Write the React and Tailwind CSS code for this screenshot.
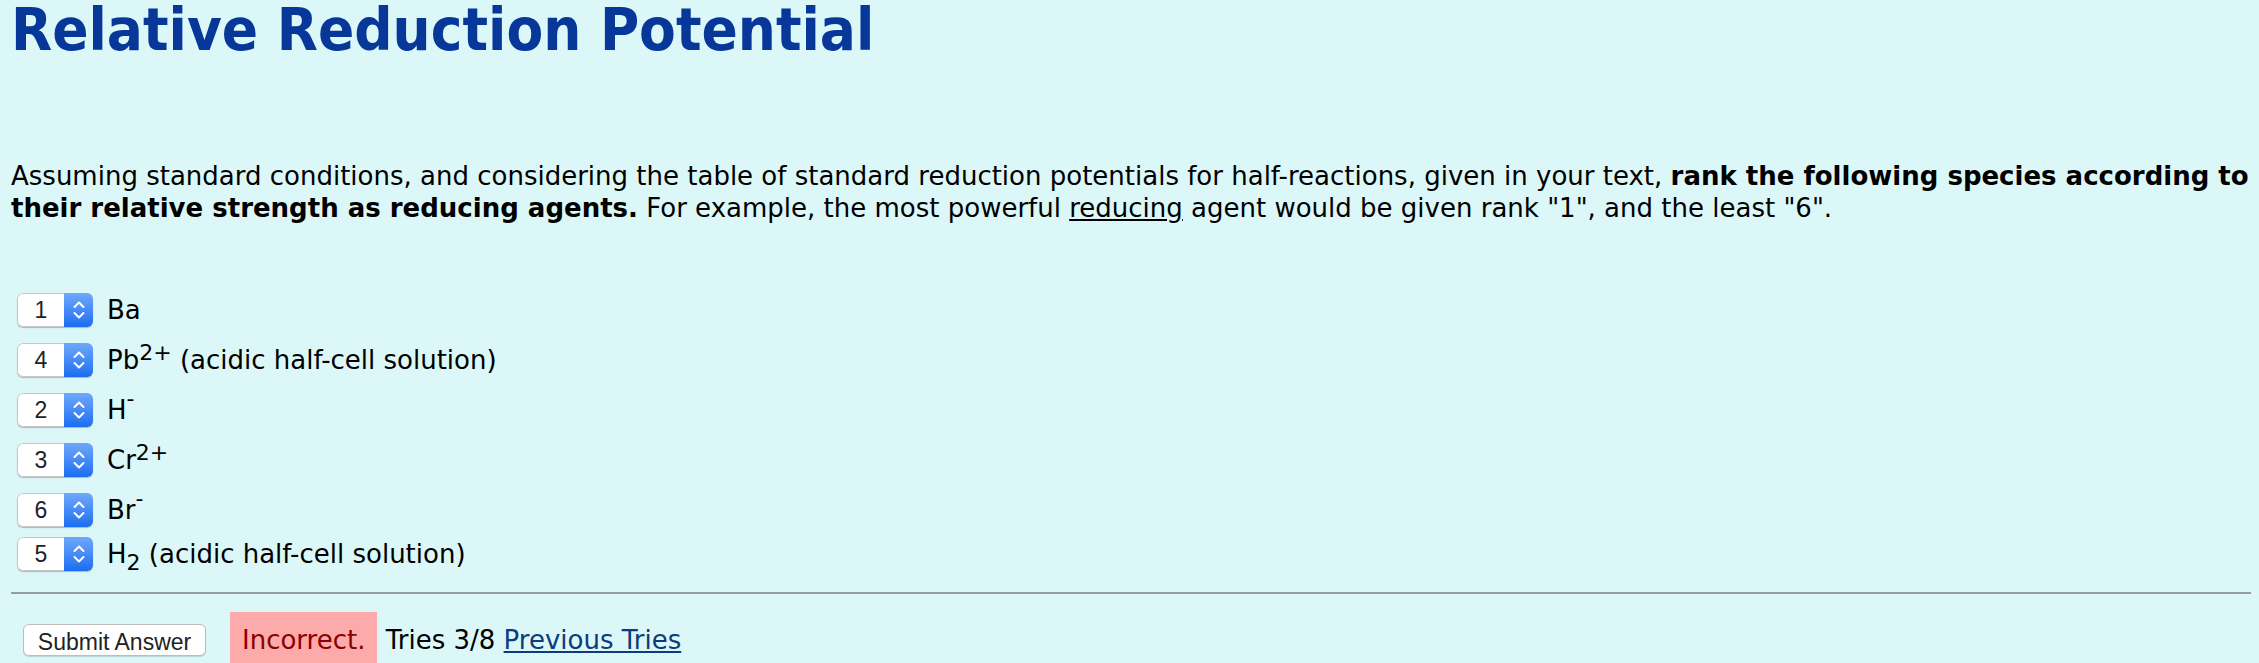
import React from "react";

function Chevrons() {
  return (
    <svg width="14" height="24" viewBox="0 0 14 24" fill="none" stroke="white" strokeWidth="2" strokeLinecap="round" strokeLinejoin="round">
      <path d="M2.5 9 L7 4.5 L11.5 9" />
      <path d="M2.5 15 L7 19.5 L11.5 15" />
    </svg>
  );
}

function Select({ value }) {
  return (
    <div className="ml-[6px] flex h-[34px] w-[76px] shrink-0 overflow-hidden rounded-[6px] shadow-[0_1px_1px_rgba(0,0,0,0.25)]">
      <div className="flex w-[47px] items-center justify-center rounded-l-[6px] border border-r-0 border-[#c8c8c8] bg-white text-[23px] text-[#222]" style={{ fontFamily: '"Liberation Sans", Arial, sans-serif' }}>
        {value}
      </div>
      <div className="flex w-[29px] items-center justify-center bg-gradient-to-b from-[#6ea8fb] to-[#1a6cf1]">
        <Chevrons />
      </div>
    </div>
  );
}

function Row({ value, children, last }) {
  return (
    <div className={"flex h-[34px] items-center " + (last ? "mt-[10px]" : "mt-[16px]")}>
      <Select value={value} />
      <div className="ml-[14px] whitespace-nowrap text-[26px] leading-[34px] text-black">{children}</div>
    </div>
  );
}

const Sup = ({ children }) => (
  <span className="relative top-[-9px] align-baseline text-[22px] leading-none">{children}</span>
);
const SupMinus = ({ children }) => (
  <span className="relative top-[-13px] align-baseline text-[22px] leading-none">{children}</span>
);
const Sub = ({ children }) => (
  <span className="relative top-[7px] align-baseline text-[22px] leading-none">{children}</span>
);

export default function App() {
  return (
    <div className="h-[663px] w-[2259px] overflow-hidden bg-[#dcf7f7] pl-[11px] pr-[8px]" style={{ fontFamily: '"DejaVu Sans", Verdana, sans-serif' }}>
      <h1 className="mt-[1px] whitespace-nowrap text-[59.5px] font-bold leading-[58px] text-[#08379a]" style={{ fontFamily: '"DejaVu Sans Condensed", "DejaVu Sans", Verdana, sans-serif' }}>
        Relative Reduction Potential
      </h1>
      <p className="mt-[101px] whitespace-nowrap text-[26px] leading-[32px] text-black">
        Assuming standard conditions, and considering the table of standard reduction potentials for half-reactions, given in your text, <b>rank the following species according to</b>
        <br />
        <b>their relative strength as reducing agents.</b> For example, the most powerful <span className="underline">reducing</span> agent would be given rank "1", and the least "6".
      </p>
      <div className="mt-[53px] flex flex-col">
        <Row value="1">Ba</Row>
        <Row value="4">Pb<Sup>2+</Sup> (acidic half-cell solution)</Row>
        <Row value="2">H<SupMinus>-</SupMinus></Row>
        <Row value="3">Cr<Sup>2+</Sup></Row>
        <Row value="6">Br<SupMinus>-</SupMinus></Row>
        <Row value="5" last>H<Sub>2</Sub> (acidic half-cell solution)</Row>
      </div>
      <div className="mt-[21px] h-[2px] bg-[#9a9a9a]" />
      <div className="mt-[18px] flex items-start">
        <button className="ml-[12px] mt-[12px] h-[32px] w-[183px] rounded-[6px] border border-[#bdbdbd] bg-white text-[23px] text-[#222] shadow-[0_1px_1px_rgba(0,0,0,0.15)]" style={{ fontFamily: '"Liberation Sans", Arial, sans-serif' }}>
          Submit Answer
        </button>
        <div className="ml-[24px] h-[80px] bg-[#fdaaaa] px-[12px] pt-[12px] text-[26px] leading-[32px] text-[#8b0000]">
          Incorrect.
        </div>
        <div className="whitespace-nowrap pt-[12px] text-[26px] leading-[32px] text-black">
          &nbsp;Tries 3/8 <a href="#" className="text-[#0b3c7c] underline">Previous Tries</a>
        </div>
      </div>
    </div>
  );
}
